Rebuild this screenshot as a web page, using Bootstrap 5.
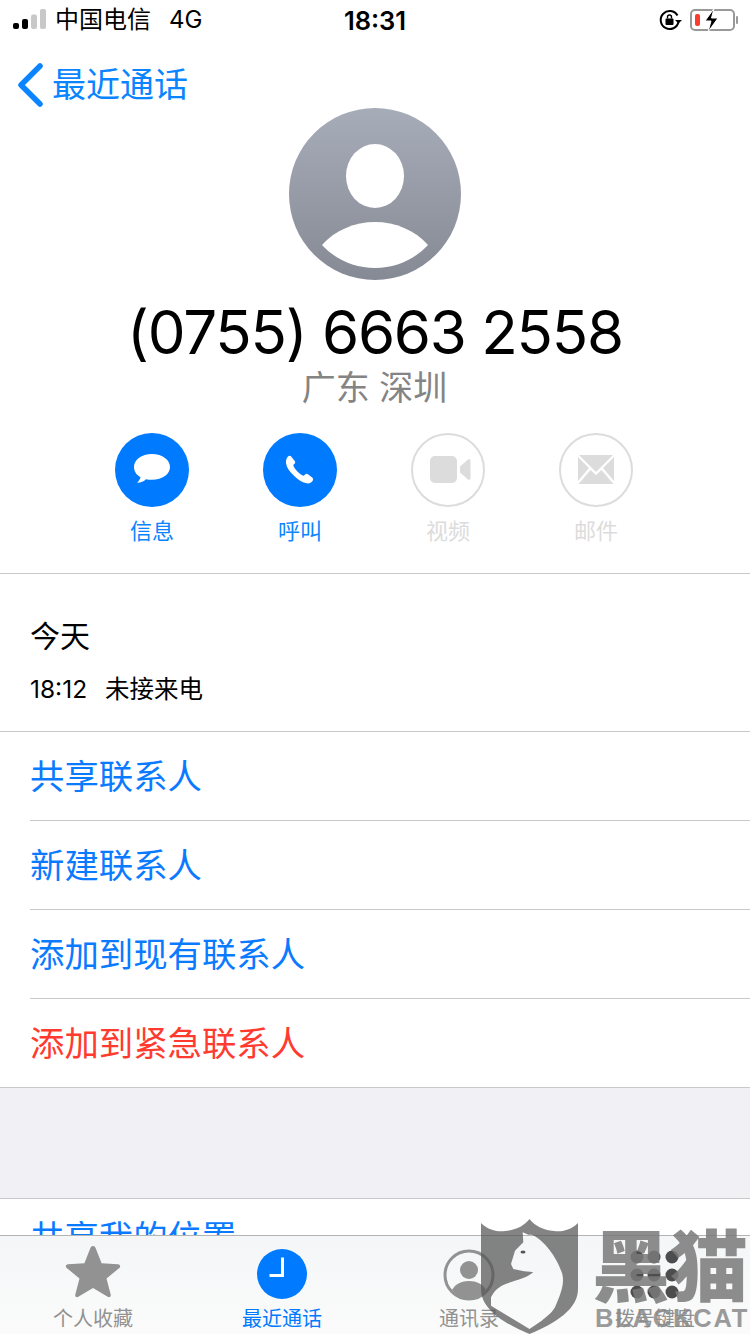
<!DOCTYPE html>
<html lang="zh">
<head>
<meta charset="utf-8">
<title>最近通话</title>
<link href="https://cdn.jsdelivr.net/npm/bootstrap@5.3.0/dist/css/bootstrap.min.css" rel="stylesheet">
<style>
html,body{margin:0;background:#fff;}
body{font-family:"Inter","Liberation Sans","Noto Sans CJK SC",sans-serif;color:#000;}
.phone{width:750px;height:1334px;overflow:hidden;position:relative;background:#fff;}
.statusbar{height:40px;padding:0 10px 0 13px;font-size:24px;line-height:40px;}
.carrier{margin-left:9px;}
.net{margin-left:18px;font-size:24px;}
.clock{position:absolute;left:0;right:0;top:0;text-align:center;font-size:25.5px;font-weight:600;line-height:42px;}
.navrow{height:68px;padding-left:17px;color:#0a84ff;font-size:34px;line-height:1;gap:8px;padding-top:22px;padding-bottom:0;}
.avatar{width:172px;height:172px;display:block;}
.phonenum{font-size:60px;line-height:72px;margin-top:16px;letter-spacing:-1.25px;font-weight:400;}
.region{font-size:34px;line-height:40px;color:#848484;margin-top:0;margin-right:1px;}
.actions{margin-top:25px;gap:74px;height:115px;margin-left:-2px;}
.action{width:74px;text-align:center;font-size:22px;line-height:26px;color:#0a84ff;text-indent:2px;}
.action.off{color:#dcdcdc;}
.disc{width:74px;height:74px;border-radius:50%;background:#007aff;margin-bottom:11px;}
.off .disc{background:#fff;border:2px solid #dcdcdc;}
.cam-ico{margin-left:5px;}
.history{margin-top:25px;border-top:1px solid #c8c8cc;border-bottom:1px solid #c8c8cc;height:159px;padding:45px 0 0 30px;}
.day{font-size:30px;line-height:34px;}
.hist-line{font-size:24.5px;line-height:28px;margin-top:22px;gap:18px;}
.linkrow{height:89px;margin-left:30px;border-bottom:1px solid #c8c8cc;font-size:34.4px;line-height:89px;color:#0a7aff;}
.linkrow.last{margin-left:0;padding-left:30px;}
.danger{color:#ff3b30;}
.gapband{height:111px;background:#f0f0f5;border-bottom:1px solid #c8c8cc;}
.cutrow{padding-left:30px;font-size:34.4px;line-height:78px;color:#0a7aff;}
.tabbar{position:absolute;left:0;right:0;bottom:0;height:99px;background:linear-gradient(#f4f6f7,#fbfbfb);border-top:1px solid #b4b4b4;}
.tab{position:absolute;top:0;width:120px;height:98px;text-align:center;font-size:20px;line-height:24px;color:#929292;}
.tab svg{display:block;margin:0 auto;}
.tab svg.tab-ico{margin-top:13px;}
.tab .tab-label{position:absolute;left:0;right:0;top:71px;}
.tab.now{color:#007aff;}
.mark-layer{position:absolute;left:0;top:0;width:750px;height:1334px;pointer-events:none;}
.shield{position:absolute;left:481px;top:1219px;}
.cat-cn{position:absolute;left:592px;top:1217px;font-size:78px;line-height:90px;font-weight:900;color:#7a7a7a;opacity:.85;white-space:nowrap;font-family:"Noto Sans CJK SC",sans-serif;}
.cat-en{position:absolute;left:595px;top:1303px;font-size:25.5px;line-height:30px;font-weight:700;color:#8a8a8a;opacity:.85;letter-spacing:1.8px;white-space:nowrap;font-family:"Liberation Sans",sans-serif;}
</style>
</head>
<body>
<div class="phone">
  <div class="statusbar d-flex align-items-center position-relative">
    <svg width="33" height="22" viewBox="0 0 33 22"><rect x="0" y="14" width="6" height="6" rx="2" fill="#000"/><rect x="9" y="10" width="6" height="10" rx="2" fill="#000"/><rect x="18" y="5.5" width="6" height="14.5" rx="2" fill="#c8c8c8"/><rect x="27" y="0" width="6" height="20" rx="2" fill="#c8c8c8"/></svg>
    <span class="carrier">中国电信</span><span class="net">4G</span>
    <span class="clock">18:31</span>
    <div class="ms-auto d-flex align-items-center">
      <svg width="24" height="24" viewBox="0 0 24 24" class="me-2"><path d="M19.5 7.5A9 9 0 1 0 20.5 14" fill="none" stroke="#000" stroke-width="2"/><path d="M17 12l3.500 3.500L24 12z" fill="#000"/><rect x="7.5" y="10.5" width="8" height="6.5" rx="1" fill="#000"/><path d="M9.5 10.5V9a2 2 0 0 1 4 0v1.500" fill="none" stroke="#000" stroke-width="1.4"/></svg>
      <svg width="50" height="24" viewBox="0 0 50 24"><rect x="1" y="2" width="43" height="20" rx="4" fill="none" stroke="#999" stroke-width="2"/><rect x="46" y="8" width="2" height="8" rx="1" fill="#999"/><rect x="5" y="6" width="5" height="12" rx="2" fill="#ff3b30"/><path d="M24 0.5L15 13h6l-3 11 10-14h-6.500z" fill="#000" stroke="#fff" stroke-width="1"/></svg>
    </div>
  </div>
  <div class="navrow d-flex align-items-center">
    <svg width="27" height="44" viewBox="0 0 27 44"><path d="M23 3L4 22l19 19" fill="none" stroke="#0a84ff" stroke-width="5.5" stroke-linecap="round" stroke-linejoin="round"/></svg>
    <span>最近通话</span>
  </div>
  <div class="d-flex flex-column align-items-center">
    <svg class="avatar" viewBox="0 0 172 172">
      <defs><linearGradient id="ag" x1="0" y1="0" x2="0" y2="1"><stop offset="0" stop-color="#a7acb9"/><stop offset="1" stop-color="#858a94"/></linearGradient></defs>
      <circle cx="86" cy="86" r="86" fill="url(#ag)"/>
      <ellipse cx="86" cy="68" rx="29" ry="32" fill="#fff"/>
      <path d="M33 137C46 122 66 114 86 114s40 8 53 23c-14 15-33 23-53 23s-39-8-53-23z" fill="#fff"/>
    </svg>
    <div class="phonenum">(0755) 6663 2558</div>
    <div class="region">广东 深圳</div>
    <div class="actions d-flex">
      <div class="action">
        <div class="disc d-flex align-items-center justify-content-center">
          <svg width="40" height="38" viewBox="0 0 40 38"><path d="M20 3C9.500 3 2 8.800 2 16c0 4.400 2.600 7.900 6.500 10.300-.4 2.100-2 4.200-3.500 5.500 3.400.2 6.800-1.500 9-3.600 1.900.4 3.900.6 6 .6 10.500 0 18-5.800 18-12.800S30.500 3 20 3z" fill="#fff"/></svg>
        </div>信息
      </div>
      <div class="action">
        <div class="disc d-flex align-items-center justify-content-center">
          <svg width="34" height="34" viewBox="0 0 34 34"><path d="M5 3.500c1-1 2.500-.8 3.400.2l3.300 4.200c.8 1 .6 2-.2 2.800l-1.300 1.300c.6 2 2 4.300 4.200 6.500s4.200 3.700 6.300 4.300l1.400-1.400c.8-.8 1.900-.8 2.800-.1l4.300 3.200c1.100.9 1.300 2.400.3 3.500-1.300 1.600-3.200 2.700-5.700 2.300-4.200-.7-8.300-3.200-12-6.800C6.500 19 3.600 14.500 3 10.300c-.4-2.600.6-5.200 2-6.800z" fill="#fff"/></svg>
        </div>呼叫
      </div>
      <div class="action off">
        <div class="disc d-flex align-items-center justify-content-center">
          <svg class="cam-ico" width="42" height="28" viewBox="0 0 42 28"><rect x="0" y="0" width="27" height="27" rx="5" fill="#dcdcdc"/><path d="M30 10.500L38 3.500c1-.8 2.500-.2 2.500 1.200v17.600c0 1.400-1.500 2-2.500 1.200l-8-7z" fill="#dcdcdc"/></svg>
        </div>视频
      </div>
      <div class="action off">
        <div class="disc d-flex align-items-center justify-content-center">
          <svg width="36" height="30" viewBox="0 0 36 30"><path d="M1 0h34L18 17z" fill="#dcdcdc"/><path d="M0 2l11 11L0 26z M36 2L25 13l11 13z" fill="#dcdcdc"/><path d="M12.500 15l5.500 5 5.500-5L35.500 29H.5z" fill="#dcdcdc"/></svg>
        </div>邮件
      </div>
    </div>
  </div>
  <div class="history">
    <div class="day">今天</div>
    <div class="hist-line d-flex"><span>18:12</span><span>未接来电</span></div>
  </div>
  <div class="linkrow">共享联系人</div>
  <div class="linkrow">新建联系人</div>
  <div class="linkrow">添加到现有联系人</div>
  <div class="linkrow last danger">添加到紧急联系人</div>
  <div class="gapband"></div>
  <div class="cutrow">共享我的位置</div>

  <div class="tabbar">
    <div class="tab" style="left:33px">
      <svg width="60" height="60" viewBox="0 0 60 60" class="mt-1"><path d="M30 6c1.300 0 2.100.7 2.600 2l6 15.300 16.400 1c2.200.1 2.900 2.300 1.300 3.700L43.500 38.500l4.200 16c.5 2-1.400 3.300-3 2.300L30 48l-14.700 8.800c-1.700 1-3.500-.3-3-2.300l4.200-16L3.700 28c-1.600-1.400-.9-3.600 1.300-3.700l16.400-1 6-15.300c.5-1.300 1.300-2 2.600-2z" fill="#929292"/></svg>
      <div class="tab-label">个人收藏</div>
    </div>
    <div class="tab now" style="left:222px">
      <svg width="50" height="50" viewBox="0 0 50 50" class="tab-ico"><circle cx="25" cy="25" r="25" fill="#007aff"/><path d="M25.500 8.500v18h-13" fill="none" stroke="#fff" stroke-width="3"/></svg>
      <div class="tab-label">最近通话</div>
    </div>
    <div class="tab" style="left:409px">
      <svg width="52" height="52" viewBox="0 0 52 52" class="tab-ico"><circle cx="26" cy="26" r="24" fill="none" stroke="#929292" stroke-width="3"/><circle cx="26" cy="21" r="9" fill="#929292"/><path d="M9 41c3-6 10-9 17-9s14 3 17 9c-4 5-10 8.500-17 8.500S13 46 9 41z" fill="#929292"/></svg>
      <div class="tab-label">通讯录</div>
    </div>
    <div class="tab" style="left:595px">
      <svg width="52" height="60" viewBox="0 0 52 60" class="tab-ico" fill="#4d4d4d"><circle cx="8" cy="8" r="6.500"/><circle cx="25" cy="8" r="6.500"/><circle cx="43" cy="8" r="6.500"/><circle cx="8" cy="26" r="6.500"/><circle cx="25" cy="26" r="6.500"/><circle cx="43" cy="26" r="6.500"/><circle cx="8" cy="43" r="6.500"/><circle cx="25" cy="43" r="6.500"/><circle cx="43" cy="43" r="6.500"/></svg>
      <div class="tab-label">拨号键盘</div>
    </div>
  </div>

  <div class="mark-layer">
    <svg class="shield" width="98" height="116" viewBox="0 0 98 116">
      <path fill-rule="evenodd" fill="#555" opacity=".72" d="M0 4C8 12 18 13 24 12 35 11 43 7 48.500 0 54 7 62 11 73 12 79 13 89 12 97 4V70C97 90 75 104 48.500 115 22 104 0 90 0 70Z M41.700 13.300L47.300 15.700 50.700 15.700C60 19 75 35 81.300 55 83 63 82 70 74 88.300 70 95 65 98 60.700 101.700L48.500 110 10 86.700 10 78.300C13 72 17 69 20.700 66.700 30 62 45 60 52.300 53.300 48 52 44 53 40.700 51.700L32.300 50 30 45 34 31.700 42.300 23.300Z"/>
      <ellipse cx="42" cy="33" rx="2.500" ry="1.500" fill="#555"/>
    </svg>
    <div class="cat-cn">黑猫</div>
    <div class="cat-en">BLACKCAT</div>
  </div>
</div>
<script src="https://cdn.jsdelivr.net/npm/bootstrap@5.3.0/dist/js/bootstrap.bundle.min.js"></script>
</body>
</html>
